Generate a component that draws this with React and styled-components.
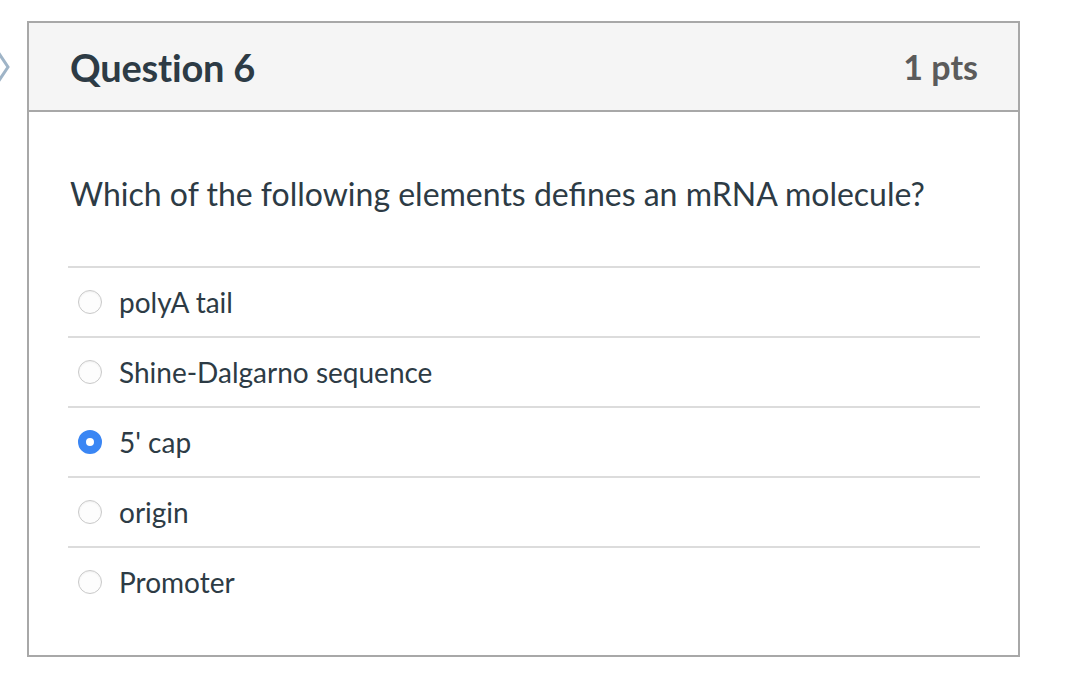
import React from 'react';
import styled, { createGlobalStyle } from 'styled-components';

const GlobalStyle = createGlobalStyle`
  html, body {
    margin: 0;
    padding: 0;
    background: #fff;
    font-family: Lato, "Open Sans", sans-serif;
  }
`;

const Page = styled.div`
  display: flex;
  align-items: flex-start;
  padding-top: 21px;
`;

const Gutter = styled.div`
  width: 27px;
  flex-shrink: 0;
  padding-top: 30px;
  svg {
    display: block;
  }
`;

const Card = styled.section`
  width: 993px;
  height: 636px;
  box-sizing: border-box;
  border: 2px solid #a8a8a8;
  display: flex;
  flex-direction: column;
`;

const Header = styled.header`
  height: 89px;
  box-sizing: border-box;
  border-bottom: 2px solid #a8a8a8;
  background: #f5f5f5;
  display: flex;
  align-items: center;
  justify-content: space-between;
  padding: 0 40px 0 41px;
`;

const Title = styled.h2`
  margin: 0;
  font-size: 38px;
  font-weight: 700;
  color: #2d3b45;
  letter-spacing: -0.2px;
`;

const Points = styled.span`
  font-size: 34px;
  font-weight: 700;
  color: #5b5b5b;
`;

const Body = styled.div`
  padding: 62px 38px 0 39px;
`;

const Prompt = styled.p`
  margin: 0 0 52px 2px;
  font-size: 32px;
  line-height: 40px;
  color: #2d3b45;
`;

const Answers = styled.ul`
  list-style: none;
  margin: 0;
  padding: 0;
`;

const Answer = styled.li`
  height: 70px;
  box-sizing: border-box;
  border-top: 2px solid #dcdcdc;
  display: flex;
  align-items: center;
  gap: 17px;
  padding-left: 10px;
  font-size: 28px;
  color: #2d3b45;
`;

const Radio = styled.span`
  width: 24px;
  height: 24px;
  box-sizing: border-box;
  border-radius: 50%;
  flex-shrink: 0;
  background: ${p => (p.$checked ? '#fff' : '#fdfdfd')};
  border: ${p => (p.$checked ? '8px solid #3a86f4' : '1.5px solid #c9c9c9')};
  box-shadow: ${p => (p.$checked ? 'none' : 'inset 0 1px 2px rgba(0,0,0,0.06)')};
`;

const options = [
  { label: 'polyA tail' },
  { label: 'Shine-Dalgarno sequence' },
  { label: "5' cap", checked: true },
  { label: 'origin' },
  { label: 'Promoter' },
];

const App = () => {
  return (
    <Page>
      <GlobalStyle />
      <Gutter>
        <svg width="10" height="32" viewBox="0 0 10 32">
          <path d="M-2 1 L8 16 L-2 31" fill="none" stroke="#9fb4c7" strokeWidth="3" />
        </svg>
      </Gutter>
      <Card>
        <Header>
          <Title>Question 6</Title>
          <Points>1 pts</Points>
        </Header>
        <Body>
          <Prompt>Which of the following elements defines an mRNA molecule?</Prompt>
          <Answers>
            {options.map(o => (
              <Answer key={o.label}>
                <Radio $checked={o.checked} />
                {o.label}
              </Answer>
            ))}
          </Answers>
        </Body>
      </Card>
    </Page>
  );
};

export default App;
